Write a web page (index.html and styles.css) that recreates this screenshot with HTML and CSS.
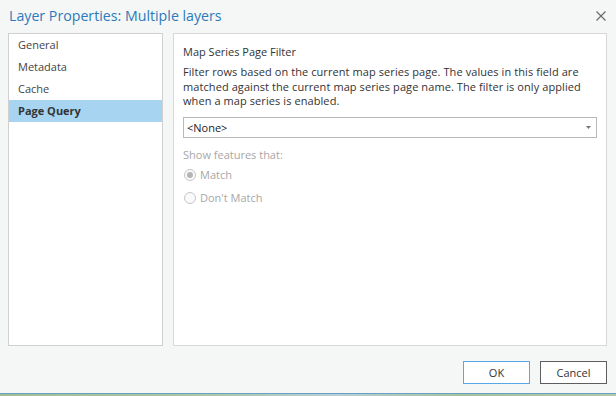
FILE: index.html
```html
<!DOCTYPE html>
<html>
<head>
<meta charset="utf-8">
<link rel="stylesheet" href="styles.css">
</head>
<body>
<div class="dialog">
  <div class="titlebar">
    <div class="title">Layer Properties: Multiple layers</div>
    <div class="close">
      <svg width="10" height="10" viewBox="0 0 10 10"><path d="M0.5 0.5 L9.5 9.5 M9.5 0.5 L0.5 9.5" stroke="#6a6a6a" stroke-width="1.2" fill="none"/></svg>
    </div>
  </div>
  <div class="main">
    <div class="sidebar">
      <div class="nav-item">General</div>
      <div class="nav-item">Metadata</div>
      <div class="nav-item">Cache</div>
      <div class="nav-item active">Page Query</div>
    </div>
    <div class="content">
      <div class="heading">Map Series Page Filter</div>
      <div class="desc"><span class="line">Filter rows based on the current map series page. The values in this field are</span> <span class="line">matched against the current map series page name. The filter is only applied</span> <span class="line">when a map series is enabled.</span></div>
      <div class="select">
        <span>&lt;None&gt;</span>
        <svg class="arrow" width="5" height="3" viewBox="0 0 5 3"><path d="M0 0 H5 L2.5 3 Z" fill="#777"/></svg>
      </div>
      <div class="muted label">Show features that:</div>
      <div class="radio-row muted">
        <span class="radio checked"><span class="dot"></span></span>
        <span>Match</span>
      </div>
      <div class="radio-row muted">
        <span class="radio"></span>
        <span>Don't Match</span>
      </div>
    </div>
  </div>
  <div class="footer">
    <button class="btn primary">OK</button>
    <button class="btn">Cancel</button>
  </div>
</div>
<div class="strip"></div>
</body>
</html>
```

FILE: styles.css
```css
html, body {
  margin: 0;
  padding: 0;
}
body {
  width: 616px;
  height: 396px;
  overflow: hidden;
  background: #f5f6f6;
  font-family: "Open Sans", "Noto Sans", sans-serif;
  font-size: 11px;
  color: #3c3c3c;
}
.dialog {
  height: 393px;
  display: flex;
  flex-direction: column;
}
.titlebar {
  height: 33px;
  display: flex;
  align-items: flex-start;
  justify-content: space-between;
}
.title {
  padding: 6px 0 0 9px;
  font-size: 14.2px;
  color: #2b7bbb;
}
.close {
  padding: 9px 10px 0 0;
}
.main {
  display: flex;
  gap: 10px;
  padding: 0 9px 0 8px;
  height: 313px;
}
.sidebar {
  width: 153px;
  background: #fff;
  border: 1px solid #d0d0d0;
}
.nav-item {
  height: 22px;
  line-height: 22px;
  padding-left: 9px;
  color: #444;
}
.nav-item.active {
  background: #a6d4f1;
  font-weight: bold;
  color: #333;
}
.content {
  flex: 1;
  background: #fff;
  border: 1px solid #d8d8d8;
  padding: 9px 9px 0 9px;
}
.heading {
  line-height: 17px;
  margin-bottom: 5px;
  color: #333;
}
.desc {
  line-height: 14.5px;
  letter-spacing: 0.08px;
  color: #333;
}
.line {
  display: block;
  white-space: nowrap;
}
.select {
  margin-top: 8px;
  height: 19px;
  border: 1px solid #b9b9b9;
  display: flex;
  align-items: center;
  justify-content: space-between;
  padding: 0 5px 0 3px;
  color: #222;
}
.arrow {
  margin-top: 1px;
}
.muted {
  color: #a7a7a7;
}
.label {
  margin-top: 8px;
  line-height: 17px;
}
.radio-row {
  display: flex;
  align-items: center;
  height: 22px;
  gap: 4px;
  margin-top: 1px;
}
.radio {
  width: 10px;
  height: 10px;
  border: 1px solid #c6c6c6;
  border-radius: 50%;
  background: #fafafa;
  display: flex;
  align-items: center;
  justify-content: center;
  margin-left: 1px;
}
.dot {
  width: 6px;
  height: 6px;
  border-radius: 50%;
  background: #b4b4b4;
}
.footer {
  flex: 1;
  display: flex;
  justify-content: flex-end;
  align-items: flex-start;
  gap: 10px;
  padding: 15px 9px 0 0;
}
.btn {
  width: 67px;
  height: 23px;
  background: #fff;
  border: 1px solid #5e5e5e;
  font-family: "Open Sans", "Noto Sans", sans-serif;
  font-size: 11px;
  color: #333;
  padding: 0;
}
.btn.primary {
  border-color: #58a8e8;
}
.strip {
  height: 3px;
  border-top: 1px solid #6aa0c4;
  box-sizing: border-box;
  background: linear-gradient(90deg, #9fbf92, #a9c7a0 30%, #b6cfd8 55%, #a3c39b 75%, #b0cba5);
}
```
